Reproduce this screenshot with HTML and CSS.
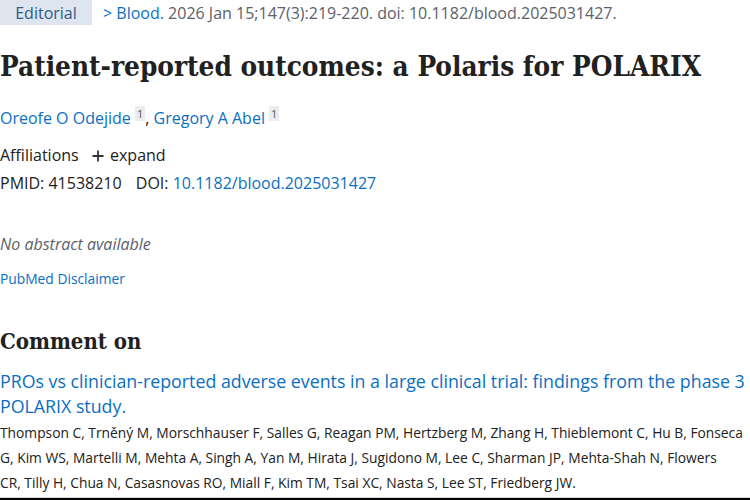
FILE: index.html
```html
<!DOCTYPE html>
<html>
<head>
<meta charset="utf-8">
<link rel="stylesheet" href="styles.css">
</head>
<body>
<main class="page">
  <div class="meta">
    <span class="badge">Editorial</span>
    <span class="cite"><span class="chev">&gt;</span> <a class="link" href="#">Blood.</a> 2026 Jan 15;147(3):219-220. doi: 10.1182/blood.2025031427.</span>
  </div>
  <h1 class="title">Patient-reported outcomes: a Polaris for POLARIX</h1>
  <div class="authors">
    <a class="link" href="#">Oreofe O Odejide</a> <sup class="aff">1</sup>, <a class="link" href="#">Gregory A Abel</a> <sup class="aff">1</sup>
  </div>
  <div class="affil">Affiliations <svg class="plus" width="12" height="12" viewBox="0 0 12 12"><path d="M6 0.5V11.5M0.5 6H11.5" stroke="#333" stroke-width="1.8"/></svg> expand</div>
  <div class="ids">PMID: 41538210 <span class="doi">DOI: <a class="link" href="#">10.1182/blood.2025031427</a></span></div>
  <p class="noabs">No abstract available</p>
  <a class="link disclaimer" href="#">PubMed Disclaimer</a>
  <h2 class="comment">Comment on</h2>
  <a class="link ctitle" href="#">PROs vs clinician-reported adverse events in a large clinical trial: findings from the phase 3 POLARIX study.</a>
  <p class="clist">Thompson C, Trněný M, Morschhauser F, Salles G, Reagan PM, Hertzberg M, Zhang H, Thieblemont C, Hu B, Fonseca G, Kim WS, Martelli M, Mehta A, Singh A, Yan M, Hirata J, Sugidono M, Lee C, Sharman JP, Mehta-Shah N, Flowers CR,&nbsp;Tilly H, Chua N, Casasnovas RO, Miall F, Kim TM, Tsai XC, Nasta S, Lee ST, Friedberg JW.</p>
</main>
</body>
</html>
```
FILE: styles.css
```css
html, body { margin: 0; padding: 0; background: #fff; }
body {
  height: 500px; overflow: hidden; box-sizing: border-box;
  border-bottom: 2px solid #000;
  box-shadow: inset 0 -1px 0 #d4d4d4;
}
.page {
  font-family: "Open Sans", "Noto Sans", sans-serif;
  color: #212121;
  width: 750px;
}
.link { color: #0a6fc2; text-decoration: none; }
.meta { display: flex; align-items: center; height: 25px; font-size: 16px; }
.badge {
  background: #dfe5ef; color: #2d5a8a; height: 25px; width: 92px;
  display: flex; align-items: center; justify-content: center; box-sizing: border-box;
}
.cite { color: #5b616b; margin-left: 11px; }
.chev { color: #0a6fc2; }
.title {
  font-family: "DejaVu Serif Condensed", "DejaVu Serif", serif; font-weight: bold; font-size: 27.7px;
  margin: 24px 0 0; line-height: 36px; color: #212121; white-space: nowrap;
}
.authors { margin-top: 17px; font-size: 16px; line-height: 24px; }
.aff { background: #ececec; color: #555; font-size: 11px; padding: 0 2px; vertical-align: 6px; }
.affil { margin-top: 13px; font-size: 16px; line-height: 24px; }
.plus { margin: 0 2px 0 9px; vertical-align: -1px; }
.ids { margin-top: 4px; font-size: 16px; line-height: 24px; }
.doi { margin-left: 10px; }
.noabs { margin: 37px 0 0; font-style: italic; color: #5b616b; font-size: 16px; line-height: 24px; }
.disclaimer { display: block; margin-top: 11px; font-size: 13.8px; line-height: 24px; }
.comment {
  font-family: "DejaVu Serif Condensed", "DejaVu Serif", serif; font-weight: bold; font-size: 22px;
  margin: 35px 0 0; line-height: 30px;
}
.ctitle { display: block; margin-top: 13px; font-size: 17.8px; line-height: 25px; }
.clist { margin: 1px 0 0; font-size: 13.8px; line-height: 25px; width: 746px; }
```
